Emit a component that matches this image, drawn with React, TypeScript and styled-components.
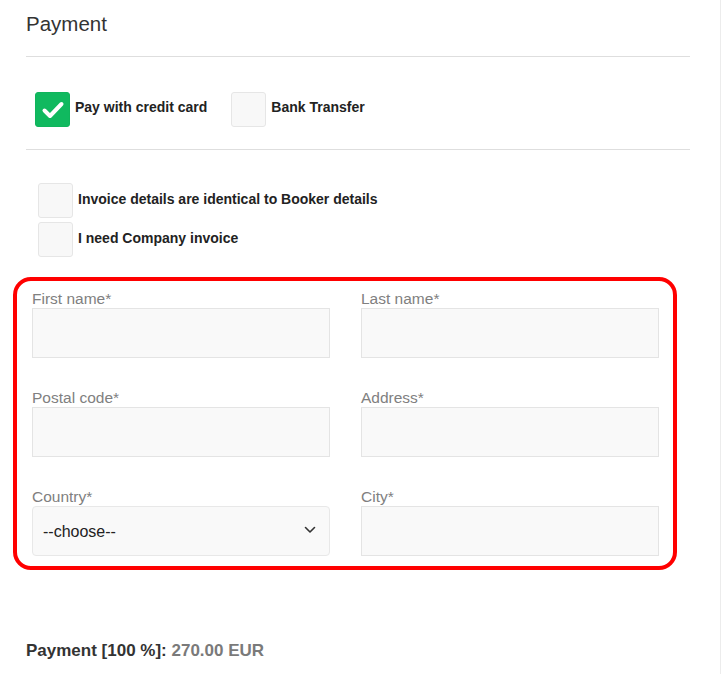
import React from "react";
import styled, { createGlobalStyle } from "styled-components";

const Global = createGlobalStyle`
  html, body { margin: 0; padding: 0; background: #fff; }
  body { font-family: "Liberation Sans", Arial, Helvetica, sans-serif; color: #333; }
  * { box-sizing: border-box; }
`;

const Page = styled.div`
  width: 721px;
  min-height: 674px;
  border-right: 1px solid #ececec;
  padding: 12px 30px 0 26px;
`;

const Title = styled.h2`
  margin: 0;
  font-size: 20.5px;
  line-height: 24px;
  font-weight: 400;
  color: #333;
`;

const Rule = styled.hr<{ $top: number }>`
  margin: ${(p) => p.$top}px 0 0;
  border: 0;
  border-top: 1px solid #dedede;
  height: 0;
`;

const MethodRow = styled.div`
  display: flex;
  gap: 24px;
  margin: 35px 0 0 9px;
`;

const CheckOption = styled.label`
  display: flex;
  align-items: center;
  gap: 5px;
  font-size: 14px;
  font-weight: 700;
  color: #222;
  cursor: pointer;
`;

const OptionText = styled.span<{ $lift: number }>`
  position: relative;
  top: -${(p) => p.$lift}px;
`;

const Box = styled.span<{ $checked?: boolean }>`
  display: inline-flex;
  align-items: center;
  justify-content: center;
  width: 35px;
  height: 35px;
  border-radius: 3px;
  border: 1px solid ${(p) => (p.$checked ? "#10b45c" : "#e6e6e6")};
  background: ${(p) => (p.$checked ? "#10b95f" : "#f8f8f8")};
`;

const InvoiceList = styled.div`
  display: flex;
  flex-direction: column;
  gap: 4px;
  margin: 33px 0 0 12px;
`;

const FormBox = styled.div`
  margin: 20px 13px 0 -13px;
  border: 4px solid #ff0000;
  border-radius: 18px;
  padding: 9px 14px 10px 15px;
  display: grid;
  grid-template-columns: 298px 298px;
  column-gap: 31px;
  row-gap: 31px;
`;

const Field = styled.div`
  display: flex;
  flex-direction: column;
`;

const Label = styled.label`
  font-size: 15.5px;
  line-height: 18px;
  color: #808080;
`;

const Input = styled.input`
  height: 50px;
  width: 100%;
  background: #f9f9f9;
  border: 1px solid #e4e4e4;
  border-radius: 0;
  outline: none;
  padding: 0 10px;
  font-family: inherit;
  font-size: 16px;
`;

const SelectWrap = styled.div`
  position: relative;
  height: 50px;
`;

const Select = styled.select`
  appearance: none;
  -webkit-appearance: none;
  width: 100%;
  height: 50px;
  background: #f9f9f9;
  border: 1px solid #e8e8e8;
  border-radius: 4px;
  padding: 0 10px;
  font-family: "Liberation Sans", Arial, sans-serif;
  font-size: 16px;
  color: #222;
  outline: none;
`;

const Chevron = styled.svg`
  position: absolute;
  right: 14px;
  top: 20px;
  pointer-events: none;
`;

const Total = styled.div`
  margin-top: 71px;
  font-size: 17px;
  line-height: 20px;
  font-weight: 700;
  color: #333;
`;

const Amount = styled.span`
  color: #7a7a7a;
`;

const Check = () => (
  <svg width="24" height="20" viewBox="0 0 24 20">
    <path d="M3.5 10.5 L9 16 L20.5 4" fill="none" stroke="#fff" strokeWidth="4" strokeLinecap="round" strokeLinejoin="round" />
  </svg>
);

export default function App() {
  return (
    <>
      <Global />
      <Page>
        <Title>Payment</Title>
        <Rule $top={20} />
        <MethodRow>
          <CheckOption>
            <Box $checked>
              <Check />
            </Box>
            <OptionText $lift={3}>Pay with credit card</OptionText>
          </CheckOption>
          <CheckOption>
            <Box />
            <OptionText $lift={3}>Bank Transfer</OptionText>
          </CheckOption>
        </MethodRow>
        <Rule $top={22} />
        <InvoiceList>
          <CheckOption>
            <Box />
            <OptionText $lift={2}>Invoice details are identical to Booker details</OptionText>
          </CheckOption>
          <CheckOption>
            <Box />
            <OptionText $lift={2}>I need Company invoice</OptionText>
          </CheckOption>
        </InvoiceList>
        <FormBox>
          <Field>
            <Label>First name*</Label>
            <Input />
          </Field>
          <Field>
            <Label>Last name*</Label>
            <Input />
          </Field>
          <Field>
            <Label>Postal code*</Label>
            <Input />
          </Field>
          <Field>
            <Label>Address*</Label>
            <Input />
          </Field>
          <Field>
            <Label>Country*</Label>
            <SelectWrap>
              <Select defaultValue="">
                <option value="">--choose--</option>
              </Select>
              <Chevron width="12" height="8" viewBox="0 0 12 8">
                <path d="M1.5 1.5 L6 6 L10.5 1.5" fill="none" stroke="#333" strokeWidth="1.6" strokeLinecap="round" strokeLinejoin="round" />
              </Chevron>
            </SelectWrap>
          </Field>
          <Field>
            <Label>City*</Label>
            <Input />
          </Field>
        </FormBox>
        <Total>
          Payment [100 %]: <Amount>270.00 EUR</Amount>
        </Total>
      </Page>
    </>
  );
}
